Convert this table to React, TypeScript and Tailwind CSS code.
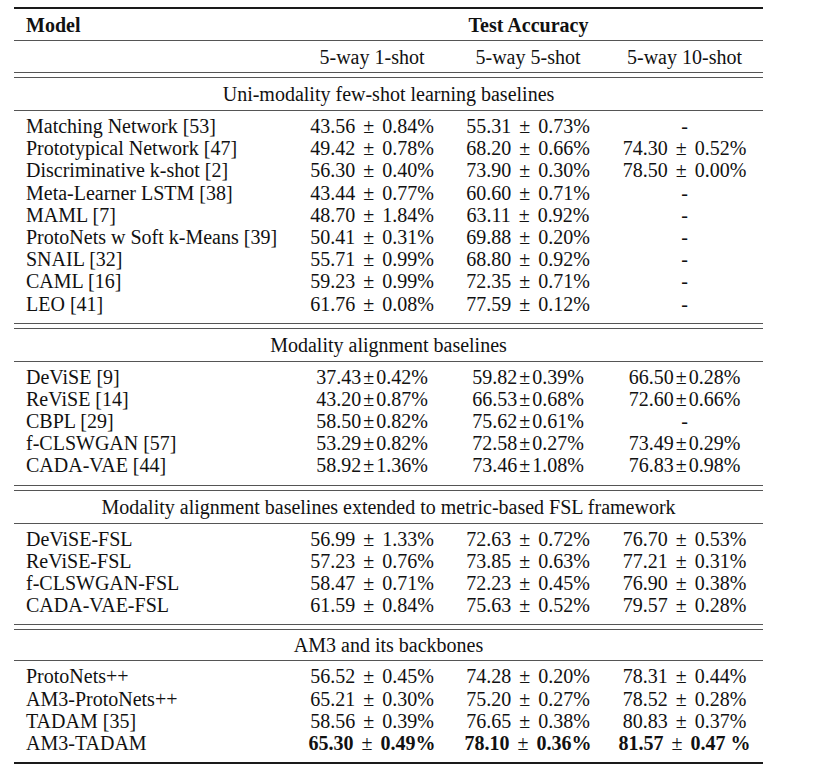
import React from "react";

type Val = { a: string; b: string; tight?: boolean; bold?: boolean };
type Cell = string | Val;
type Row = [string, Cell, Cell, Cell];

const p = (a: string, b: string): Val => ({ a, b });
const t = (a: string, b: string): Val => ({ a, b, tight: true });
const bold = (a: string, b: string): Val => ({ a, b, bold: true });

const uni: Row[] = [
  ["Matching Network [53]", p("43.56", "0.84%"), p("55.31", "0.73%"), "-"],
  ["Prototypical Network [47]", p("49.42", "0.78%"), p("68.20", "0.66%"), p("74.30", "0.52%")],
  ["Discriminative k-shot [2]", p("56.30", "0.40%"), p("73.90", "0.30%"), p("78.50", "0.00%")],
  ["Meta-Learner LSTM [38]", p("43.44", "0.77%"), p("60.60", "0.71%"), "-"],
  ["MAML [7]", p("48.70", "1.84%"), p("63.11", "0.92%"), "-"],
  ["ProtoNets w Soft k-Means [39]", p("50.41", "0.31%"), p("69.88", "0.20%"), "-"],
  ["SNAIL [32]", p("55.71", "0.99%"), p("68.80", "0.92%"), "-"],
  ["CAML [16]", p("59.23", "0.99%"), p("72.35", "0.71%"), "-"],
  ["LEO [41]", p("61.76", "0.08%"), p("77.59", "0.12%"), "-"],
];

const align: Row[] = [
  ["DeViSE [9]", t("37.43", "0.42%"), t("59.82", "0.39%"), t("66.50", "0.28%")],
  ["ReViSE [14]", t("43.20", "0.87%"), t("66.53", "0.68%"), t("72.60", "0.66%")],
  ["CBPL [29]", t("58.50", "0.82%"), t("75.62", "0.61%"), "-"],
  ["f-CLSWGAN [57]", t("53.29", "0.82%"), t("72.58", "0.27%"), t("73.49", "0.29%")],
  ["CADA-VAE [44]", t("58.92", "1.36%"), t("73.46", "1.08%"), t("76.83", "0.98%")],
];

const extended: Row[] = [
  ["DeViSE-FSL", p("56.99", "1.33%"), p("72.63", "0.72%"), p("76.70", "0.53%")],
  ["ReViSE-FSL", p("57.23", "0.76%"), p("73.85", "0.63%"), p("77.21", "0.31%")],
  ["f-CLSWGAN-FSL", p("58.47", "0.71%"), p("72.23", "0.45%"), p("76.90", "0.38%")],
  ["CADA-VAE-FSL", p("61.59", "0.84%"), p("75.63", "0.52%"), p("79.57", "0.28%")],
];

const am3: Row[] = [
  ["ProtoNets++", p("56.52", "0.45%"), p("74.28", "0.20%"), p("78.31", "0.44%")],
  ["AM3-ProtoNets++", p("65.21", "0.30%"), p("75.20", "0.27%"), p("78.52", "0.28%")],
  ["TADAM [35]", p("58.56", "0.39%"), p("76.65", "0.38%"), p("80.83", "0.37%")],
  ["AM3-TADAM", bold("65.30", "0.49%"), bold("78.10", "0.36%"), bold("81.57", "0.47 %")],
];

function Num({ v }: { v: Cell }) {
  if (typeof v === "string") return <span>{v}</span>;
  return (
    <span className={v.bold ? "font-bold" : ""}>
      {v.a}
      <span className={v.tight ? "mx-[2px] font-normal" : "mx-[8px] font-normal"}>±</span>
      {v.b}
    </span>
  );
}

function Thin() {
  return <div className="h-px bg-[#555]" />;
}

function Double() {
  return (
    <div className="flex flex-col gap-[4px]">
      <Thin />
      <Thin />
    </div>
  );
}

function Section({ title, rows, last }: { title: string; rows: Row[]; last?: boolean }) {
  return (
    <>
      <Double />
      <div
        className={
          last
            ? "h-[30px] flex items-center justify-center"
            : "h-[32px] flex items-center justify-center"
        }
      >
        {title}
      </div>
      <Thin />
      <div className="pt-[4px] pb-[8px]">
        {rows.map((r) => (
          <div
            key={r[0]}
            className="grid grid-cols-[280px_156px_156px_157px] h-[22.2px] leading-[22.2px]"
          >
            <div className="pl-[12px] whitespace-nowrap">{r[0]}</div>
            <div className="text-center whitespace-nowrap">
              <Num v={r[1]} />
            </div>
            <div className="text-center whitespace-nowrap">
              <Num v={r[2]} />
            </div>
            <div className="text-center whitespace-nowrap">
              <Num v={r[3]} />
            </div>
          </div>
        ))}
      </div>
    </>
  );
}

export default function App() {
  return (
    <div className="w-[820px] h-[768px] bg-white pt-[7px] pl-[14px] text-[20px] text-[#111] font-['Liberation_Serif','Times_New_Roman',serif]">
      <div className="w-[749px]">
        <div className="h-[2px] bg-[#1a1a1a]" />

        <div className="grid grid-cols-[280px_156px_156px_157px] h-[31px] items-center font-bold">
          <div className="pl-[12px]">Model</div>
          <div className="col-span-3 text-center">Test Accuracy</div>
        </div>
        <Thin />

        <div className="grid grid-cols-[280px_156px_156px_157px] h-[31px] items-center">
          <div />
          <div className="text-center">5-way 1-shot</div>
          <div className="text-center">5-way 5-shot</div>
          <div className="text-center">5-way 10-shot</div>
        </div>

        <Section title="Uni-modality few-shot learning baselines" rows={uni} />
        <Section title="Modality alignment baselines" rows={align} />
        <Section
          title="Modality alignment baselines extended to metric-based FSL framework"
          rows={extended}
        />
        <Section title="AM3 and its backbones" rows={am3} last />

        <div className="h-[2px] bg-[#1a1a1a]" />
      </div>
    </div>
  );
}
